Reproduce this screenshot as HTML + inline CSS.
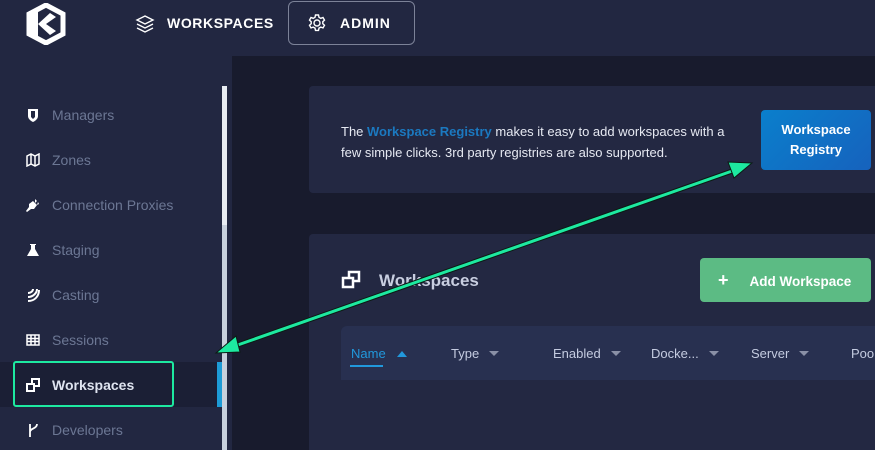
<!DOCTYPE html>
<html><head><style>
html,body{margin:0;width:875px;height:450px;overflow:hidden}
body{background:#222741;font-family:"Liberation Sans",sans-serif;position:relative}
.abs{position:absolute}
.nav{font-weight:bold;color:#fff;font-size:14px;letter-spacing:0.6px}
.side{position:absolute;left:52px;font-size:14px;color:#6c7794}
.ic{position:absolute;left:26px;width:14px;height:14px}
.th{position:absolute;top:346px;font-size:13px;color:#c4cbe0}
.tri{display:inline-block;width:0;height:0;border-left:5px solid transparent;border-right:5px solid transparent;border-top:5px solid #8a90a6;margin-left:10px;vertical-align:2px}
</style></head><body>
<svg class="abs" style="left:26px;top:3px" width="40" height="42" viewBox="0 0 40 42"><path d="M20 2 L37 11 L37 31 L20 40 L3 31 L3 11 Z" fill="none" stroke="#fff" stroke-width="5"/><path d="M3 8 L12 8 L12 34 L3 34Z M12 21 L24 10 L30 14 L20 21 L30 28 L24 32Z" fill="#fff"/></svg>
<svg class="abs" style="left:135px;top:14px" width="20" height="20" viewBox="0 0 20 20" fill="none" stroke="#fff" stroke-width="1.4"><path d="M10 2 L18 6 L10 10 L2 6Z"/><path d="M2 10 L10 14 L18 10"/><path d="M2 14 L10 18 L18 14"/></svg>
<div class="abs nav" style="left:167px;top:15px">WORKSPACES</div>
<div class="abs" style="left:288px;top:1px;width:127px;height:44px;border:1px solid #7c8298;border-radius:6px;box-sizing:border-box"></div>
<svg class="abs" style="left:307px;top:13px" width="20" height="20" viewBox="0 0 20 20" fill="none" stroke="#fff" stroke-width="1.4"><circle cx="10" cy="10" r="3"/><path d="M8.5 2h3l.5 2.3 1.8 1 2.2-.8 1.5 2.6-1.7 1.6v2l1.7 1.6-1.5 2.6-2.2-.8-1.8 1-.5 2.3h-3l-.5-2.3-1.8-1-2.2.8-1.5-2.6 1.7-1.6v-2L2.5 7.1 4 4.5l2.2.8 1.8-1z"/></svg>
<div class="abs nav" style="left:340px;top:15px;letter-spacing:1px">ADMIN</div>
<div class="abs" style="left:232px;top:56px;right:0;height:394px;background:#181b2d"></div>
<div class="abs" style="left:309px;top:86px;right:0;height:107px;background:#232842;border-radius:4px 0 0 4px"></div>
<div class="abs" style="left:341px;top:121px;width:400px;font-size:13px;line-height:21px;color:#e6e9f2">The <b style="color:#1b79c0">Workspace Registry</b> makes it easy to add workspaces with a few simple clicks. 3rd party registries are also supported.</div>
<div class="abs" style="left:761px;top:110px;width:110px;height:60px;border-radius:4px;background:linear-gradient(135deg,#0a7fcc,#1662bd);color:#fff;font-weight:bold;font-size:13px;text-align:center;line-height:20px;padding-top:10px;box-sizing:border-box">Workspace<br>Registry</div>
<div class="abs" style="left:309px;top:234px;right:0;height:216px;background:#232842;border-radius:4px 0 0 0"></div>
<svg class="abs" style="left:341px;top:270px" width="22" height="20" viewBox="0 0 22 20"><rect x="8" y="2" width="10" height="9" fill="none" stroke="#fff" stroke-width="2.5"/><rect x="2" y="8" width="10" height="9" fill="#232842" stroke="#fff" stroke-width="2.5"/></svg>
<div class="abs" style="left:379px;top:271px;font-size:17px;font-weight:bold;color:#c8cee0">Workspaces</div>
<div class="abs" style="left:700px;top:258px;width:171px;height:44px;background:#5cbb84;border-radius:4px;color:#fff;font-weight:bold;font-size:13.5px;line-height:44px"><span style="margin-left:18px;font-size:18px">+</span><span style="margin-left:21px">Add Workspace</span></div>
<div class="abs" style="left:341px;top:326px;right:0;height:54px;background:#283050;border-radius:6px 0 0 0"></div>
<div class="th" style="left:351px;color:#2198dc">Name<span style="display:inline-block;border-left:5px solid transparent;border-right:5px solid transparent;border-bottom:6px solid #2198dc;margin-left:11px;vertical-align:1px"></span></div>
<div class="abs" style="left:350px;top:365px;width:33px;height:2px;background:#2198dc"></div>
<div class="th" style="left:451px">Type<span class="tri"></span></div>
<div class="th" style="left:553px">Enabled<span class="tri"></span></div>
<div class="th" style="left:651px">Docke...<span class="tri"></span></div>
<div class="th" style="left:751px">Server<span class="tri"></span></div>
<div class="th" style="left:851px">Poo</div>
<div class="abs" style="left:222px;top:86px;width:5px;height:364px;background:#e8ecf2"></div>
<div class="abs" style="left:222px;top:225px;width:5px;height:225px;background:#c7d0dc"></div>
<div class="abs" style="left:0;top:362px;width:222px;height:45px;background:#1b1f35"></div>
<div class="abs" style="left:217px;top:362px;width:5px;height:45px;background:#1d9bd6"></div>
<div class="abs" style="left:13px;top:361px;width:161px;height:46px;border:2px solid #1de9a0;border-radius:3px;box-sizing:border-box"></div>
<svg class="ic" style="top:108px" viewBox="0 0 14 14"><path d="M2 1h10v7c0 3-3 5-5 6-2-1-5-3-5-6z" fill="#fff"/><path d="M5 3h4v6l-2 2-2-2z" fill="#222741"/></svg>
<div class="side" style="top:107px">Managers</div>
<svg class="ic" style="top:153px" viewBox="0 0 14 14" fill="none" stroke="#fff" stroke-width="1.5"><path d="M1 3l4-2 4 2 4-2v10l-4 2-4-2-4 2z M5 1v10 M9 3v10"/></svg>
<div class="side" style="top:152px">Zones</div>
<svg class="ic" style="top:198px" viewBox="0 0 14 14" fill="#fff"><path d="M7 3l4 4-3 4-3 0-4 3-1-1 3-4 0-3z M9 1l2 2-2 2z M12 4l1 2-2 1z"/></svg>
<div class="side" style="top:197px">Connection Proxies</div>
<svg class="ic" style="top:243px" viewBox="0 0 14 14" fill="#fff"><path d="M4 1h6v1H9v4l4 7H1l4-7V2H4z"/></svg>
<div class="side" style="top:242px">Staging</div>
<svg class="ic" style="top:288px" viewBox="0 0 14 14" fill="none" stroke="#fff" stroke-width="2"><path d="M2 5c3 0 5-2 5-4 M2 9c5 0 9-4 9-8 M2 13c7 0 11-5 11-11"/></svg>
<div class="side" style="top:287px">Casting</div>
<svg class="ic" style="top:333px" viewBox="0 0 14 14" fill="none" stroke="#fff" stroke-width="1.5"><rect x="1" y="2" width="12" height="10"/><path d="M1 5.5h12M1 8.5h12M5 2v10M9 2v10"/></svg>
<div class="side" style="top:332px">Sessions</div>
<svg class="ic" style="top:378px" viewBox="0 0 14 14"><rect x="6" y="1" width="7" height="7" fill="none" stroke="#fff" stroke-width="2"/><rect x="1" y="6" width="7" height="7" fill="#1b1f35" stroke="#fff" stroke-width="2"/></svg>
<div class="side" style="top:377px;color:#dfe4f0;font-weight:bold">Workspaces</div>
<svg class="ic" style="top:423px" viewBox="0 0 14 14" fill="none" stroke="#fff" stroke-width="1.8"><path d="M4 1v13 M11 1c0 5-7 4-7 8"/></svg>
<div class="side" style="top:422px">Developers</div>
<svg class="abs" style="left:0;top:0" width="875" height="450"><line x1="232" y1="347" x2="735" y2="170" stroke="#0c1a14" stroke-width="5"/><line x1="232" y1="347" x2="735" y2="170" stroke="#1de9a0" stroke-width="3"/><path d="M216 353 L236 336 L240 352Z M752 163 L728 162 L734 178Z" fill="#1de9a0" stroke="#0c1a14" stroke-width="1"/></svg>
</body></html>
